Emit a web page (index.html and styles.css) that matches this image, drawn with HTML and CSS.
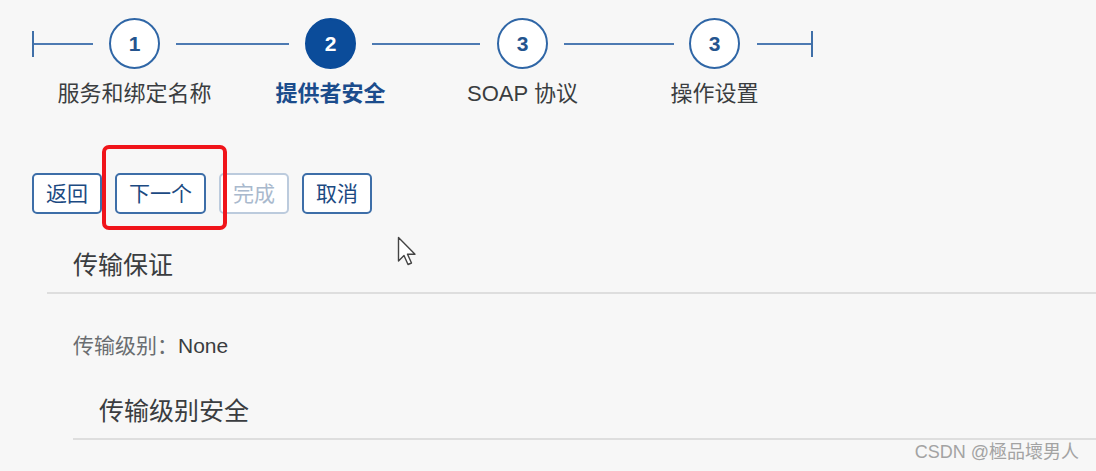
FILE: index.html
```html
<!DOCTYPE html>
<html lang="zh">
<head>
<meta charset="utf-8">
<title>Wizard</title>
<link rel="stylesheet" href="styles.css">
</head>
<body>
<div class="page">
  <div class="stepper">
    <div class="tick"></div>
    <div class="line w59"></div>
    <div class="step">
      <div class="circle">1</div>
      <div class="label">服务和绑定名称</div>
    </div>
    <div class="line w113"></div>
    <div class="step">
      <div class="circle active">2</div>
      <div class="label current">提供者安全</div>
    </div>
    <div class="line w108"></div>
    <div class="step">
      <div class="circle">3</div>
      <div class="label">SOAP 协议</div>
    </div>
    <div class="line w110"></div>
    <div class="step">
      <div class="circle">3</div>
      <div class="label">操作设置</div>
    </div>
    <div class="line w54"></div>
    <div class="tick"></div>
  </div>

  <div class="buttons">
    <button class="btn">返回</button>
    <div class="highlight-wrap">
      <button class="btn">下一个</button>
      <div class="highlight"></div>
    </div>
    <button class="btn disabled" disabled>完成</button>
    <button class="btn">取消</button>
  </div>

  <div class="section">
    <div class="section-title">传输保证</div>
    <div class="field"><span class="field-label">传输级别：</span><span class="field-value">None</span></div>
    <div class="subsection">
      <div class="subsection-title">传输级别安全</div>
    </div>
  </div>

  <svg class="cursor" width="22" height="32" viewBox="0 0 22 32">
    <path d="M1.5 1.5 L1.5 25 L7 19.5 L11 28.5 L14.5 27 L10.5 18.2 L18 18.2 Z" fill="#fff" stroke="#444" stroke-width="1.4" stroke-linejoin="round"/>
  </svg>

  <div class="watermark">CSDN @極品壞男人</div>
</div>
</body>
</html>
```
FILE: styles.css
```css
html, body {
  margin: 0;
  padding: 0;
  background: #f7f7f7;
}
body {
  font-family: "Liberation Sans", "Noto Sans CJK SC", sans-serif;
  color: #32363a;
  width: 1096px;
  height: 471px;
  overflow: hidden;
}
.page {
  position: relative;
  width: 1096px;
  height: 471px;
}
.stepper {
  display: flex;
  align-items: flex-start;
  padding: 18px 0 0 32px;
}
.tick {
  width: 2px;
  height: 26px;
  margin-top: 13px;
  background: #3f6fa8;
  flex: none;
}
.line {
  height: 2px;
  margin-top: 24.5px;
  background: #4d7ab2;
  flex: none;
}
.w59 { width: 59px; margin-right: 16px; }
.w113 { width: 113px; margin-left: 16px; margin-right: 16px; }
.w108 { width: 108px; margin-left: 16px; margin-right: 17px; }
.w110 { width: 110px; margin-left: 16px; margin-right: 15px; }
.w54 { width: 54px; margin-left: 17px; }
.step {
  width: 51px;
  display: flex;
  flex-direction: column;
  align-items: center;
  flex: none;
}
.circle {
  box-sizing: border-box;
  width: 51px;
  height: 51px;
  border-radius: 50%;
  border: 2px solid #2f66a6;
  background: #fff;
  color: #24548e;
  font-weight: bold;
  font-size: 21px;
  display: flex;
  align-items: center;
  justify-content: center;
}
.circle.active {
  background: #0b4c9a;
  border-color: #0b4c9a;
  color: #fff;
}
.label {
  margin-top: 10px;
  white-space: nowrap;
  font-size: 22px;
  line-height: 30px;
  color: #3a3d40;
}
.label.current {
  color: #1b4c8c;
  font-weight: bold;
}
.buttons {
  display: flex;
  gap: 13px;
  margin-top: 64px;
  padding-left: 32px;
}
.btn {
  box-sizing: border-box;
  height: 41px;
  padding: 0 12px;
  border: 2px solid #3d6ea8;
  border-radius: 5px;
  background: #fff;
  color: #1c4a82;
  font-family: "Liberation Sans", "Noto Sans CJK SC", sans-serif;
  font-size: 21px;
  line-height: 37px;
}
.btn.disabled {
  border-color: #bccbdd;
  color: #a9b9cd;
}
.highlight-wrap {
  position: relative;
  display: flex;
}
.highlight {
  position: absolute;
  top: -28px;
  left: -13px;
  right: -21px;
  bottom: -16px;
  border: 4px solid #f0141a;
  border-radius: 7px;
  pointer-events: none;
}
.section {
  margin-left: 47px;
  padding-top: 35px;
}
.section-title {
  font-size: 25px;
  line-height: 32px;
  padding-left: 26px;
  padding-bottom: 11px;
  border-bottom: 2px solid #dedede;
  color: #3a3d40;
}
.field {
  margin-top: 37px;
  padding-left: 26px;
  font-size: 21px;
  line-height: 30px;
}
.field-label {
  color: #6a6d70;
}
.field-value {
  color: #3a3d40;
}
.subsection {
  margin-left: 26px;
  margin-top: 34px;
}
.subsection-title {
  font-size: 25px;
  line-height: 32px;
  padding-left: 26px;
  padding-bottom: 11px;
  border-bottom: 2px solid #dedede;
  color: #3a3d40;
}
.cursor {
  position: absolute;
  left: 397px;
  top: 236px;
}
.watermark {
  position: absolute;
  right: 17px;
  top: 439px;
  font-size: 18px;
  line-height: 26px;
  color: #a3a3a3;
}
```
